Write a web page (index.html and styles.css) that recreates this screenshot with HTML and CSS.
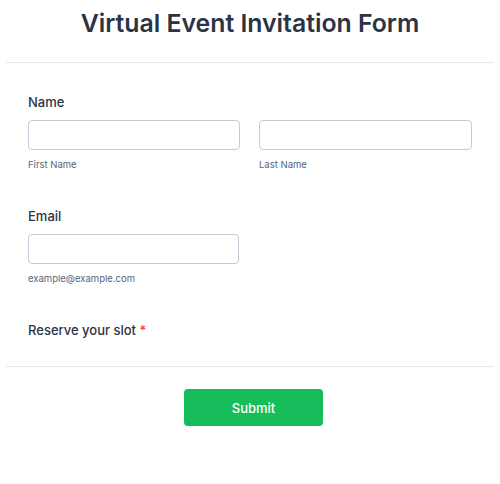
FILE: index.html
```html
<!DOCTYPE html>
<html lang="en">
<head>
<meta charset="utf-8">
<title>Virtual Event Invitation Form</title>
<link rel="stylesheet" href="styles.css">
</head>
<body>
<div class="form">
  <header class="form-header">
    <h1 class="form-title">Virtual Event Invitation Form</h1>
  </header>
  <div class="form-body">
    <div class="field">
      <label class="field-label">Name</label>
      <div class="name-row">
        <div class="sub-field">
          <input class="text-input" type="text">
          <span class="sub-label">First Name</span>
        </div>
        <div class="sub-field">
          <input class="text-input" type="text">
          <span class="sub-label">Last Name</span>
        </div>
      </div>
    </div>
    <div class="field">
      <label class="field-label">Email</label>
      <div class="email-row">
        <div class="sub-field">
          <input class="text-input" type="email">
          <span class="sub-label">example@example.com</span>
        </div>
      </div>
    </div>
    <div class="field field-last">
      <label class="field-label">Reserve your slot <span class="required">*</span></label>
    </div>
  </div>
  <div class="form-footer">
    <button class="submit-btn" type="button">Submit</button>
  </div>
</div>
</body>
</html>
```

FILE: styles.css
```css
html, body {
  margin: 0;
  padding: 0;
  background: #ffffff;
}

body {
  font-family: Inter, "Noto Sans", sans-serif;
  color: #2c3345;
}

.form {
  margin: 0 6px;
}

.form-header {
  padding-top: 8px;
  padding-bottom: 24px;
  border-bottom: 1px solid #e5e5ef;
  text-align: center;
}

.form-title {
  margin: 0;
  font-size: 24.8px;
  line-height: 30px;
  font-weight: 600;
  color: #2c3345;
}

.form-body {
  padding: 31px 22px 28px;
  border-bottom: 1px solid #e5e5ef;
}

.field {
  display: flex;
  flex-direction: column;
  margin-bottom: 37px;
}

.field-last {
  margin-bottom: 0;
}

.field-label {
  font-size: 13px;
  line-height: 16px;
  font-weight: 500;
  color: #2c3345;
  margin-bottom: 10px;
}

.field-last .field-label {
  margin-bottom: 0;
}

.required {
  color: #f23a3c;
}

.name-row {
  display: grid;
  grid-template-columns: 212px 213px;
  column-gap: 19px;
}

.email-row {
  display: grid;
  grid-template-columns: 211px;
}

.sub-field {
  display: flex;
  flex-direction: column;
}

.text-input {
  box-sizing: border-box;
  height: 30px;
  width: 100%;
  margin: 0;
  padding: 0 8px;
  border: 1px solid #c3cad8;
  border-radius: 4px;
  background: #ffffff;
  font-family: inherit;
  font-size: 13px;
}

.sub-label {
  margin-top: 9px;
  font-size: 9.5px;
  line-height: 12px;
  color: #57647e;
}

.form-footer {
  display: flex;
  justify-content: center;
  padding-top: 22px;
}

.submit-btn {
  width: 139px;
  height: 37px;
  margin-left: 7px;
  border: 0;
  border-radius: 4px;
  background: #18bd5b;
  color: #ffffff;
  font-family: inherit;
  font-size: 13px;
  font-weight: 500;
}
```
